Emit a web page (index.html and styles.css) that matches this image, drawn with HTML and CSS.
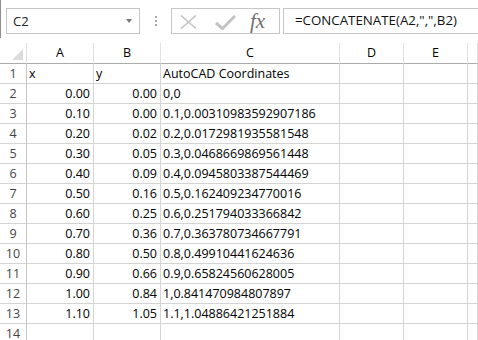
FILE: index.html
```html
<!DOCTYPE html>
<html lang="en">
<head>
    <meta charset="UTF-8">
    <title>AutoCAD Coordinates</title>
    <link rel="stylesheet" href="styles.css">
</head>
<body>

    <div class="toolbar">
        <div class="namebox">
            <span class="ref">C2</span>
            <span class="caret"></span>
        </div>
        <div class="grip"><i></i><i></i><i></i></div>
        <div class="fnbox">
            <svg class="cancel" width="17" height="14" viewBox="0 0 17 14">
                <path d="M1 0.5 L16 13.5 M16 0.5 L1 13.5" stroke="#c4c4c4" stroke-width="1.6" fill="none"/>
            </svg>
            <svg class="enter" width="21" height="15" viewBox="0 0 21 15">
                <path d="M1 8 L7.5 13.5 L20 1" stroke="#c4c4c4" stroke-width="3" fill="none"/>
            </svg>
            <span class="fx">fx</span>
        </div>
        <div class="formula">=CONCATENATE(A2,",",B2)</div>
    </div>

    <div class="sheet">
        <div class="row head">
            <div class="corner"></div>
            <div>A</div><div>B</div><div>C</div><div>D</div><div>E</div><div></div>
        </div>
        <div class="row">
            <div class="rh">1</div>
            <div>x</div><div>y</div><div>AutoCAD Coordinates</div><div></div><div></div><div></div>
        </div>
        <div class="row">
            <div class="rh">2</div>
            <div class="num">0.00</div><div class="num">0.00</div><div>0,0</div><div></div><div></div><div></div>
        </div>
        <div class="row">
            <div class="rh">3</div>
            <div class="num">0.10</div><div class="num">0.00</div><div>0.1,0.00310983592907186</div><div></div><div></div><div></div>
        </div>
        <div class="row">
            <div class="rh">4</div>
            <div class="num">0.20</div><div class="num">0.02</div><div>0.2,0.0172981935581548</div><div></div><div></div><div></div>
        </div>
        <div class="row">
            <div class="rh">5</div>
            <div class="num">0.30</div><div class="num">0.05</div><div>0.3,0.0468669869561448</div><div></div><div></div><div></div>
        </div>
        <div class="row">
            <div class="rh">6</div>
            <div class="num">0.40</div><div class="num">0.09</div><div>0.4,0.0945803387544469</div><div></div><div></div><div></div>
        </div>
        <div class="row">
            <div class="rh">7</div>
            <div class="num">0.50</div><div class="num">0.16</div><div>0.5,0.162409234770016</div><div></div><div></div><div></div>
        </div>
        <div class="row">
            <div class="rh">8</div>
            <div class="num">0.60</div><div class="num">0.25</div><div>0.6,0.251794033366842</div><div></div><div></div><div></div>
        </div>
        <div class="row">
            <div class="rh">9</div>
            <div class="num">0.70</div><div class="num">0.36</div><div>0.7,0.363780734667791</div><div></div><div></div><div></div>
        </div>
        <div class="row">
            <div class="rh">10</div>
            <div class="num">0.80</div><div class="num">0.50</div><div>0.8,0.49910441624636</div><div></div><div></div><div></div>
        </div>
        <div class="row">
            <div class="rh">11</div>
            <div class="num">0.90</div><div class="num">0.66</div><div>0.9,0.65824560628005</div><div></div><div></div><div></div>
        </div>
        <div class="row">
            <div class="rh">12</div>
            <div class="num">1.00</div><div class="num">0.84</div><div>1,0.841470984807897</div><div></div><div></div><div></div>
        </div>
        <div class="row">
            <div class="rh">13</div>
            <div class="num">1.10</div><div class="num">1.05</div><div>1.1,1.04886421251884</div><div></div><div></div><div></div>
        </div>
        <div class="row">
            <div class="rh">14</div>
            <div></div><div></div><div></div><div></div><div></div><div></div>
        </div>
    </div>

</body>
</html>
```

FILE: styles.css
```css
body {
    margin: 0;
    background: #fff;
    font-family: 'Open Sans', 'Liberation Sans', sans-serif;
    overflow: hidden;
}

/* formula bar */
.toolbar {
    display: flex;
    align-items: flex-start;
    height: 38px;
    margin-bottom: 5px;
    padding: 8px 0 0 5px;
    box-sizing: border-box;
    border-left: 1px solid #8f8f8f;
}

.namebox {
    display: flex;
    align-items: center;
    width: 134px;
    height: 26px;
    box-sizing: border-box;
    border: 1px solid #c6c6c6;
    padding: 0 7px 0 6px;
}

.ref {
    font-size: 13px;
    color: #222;
}

.caret {
    margin-left: auto;
    width: 0;
    height: 0;
    border-left: 3.5px solid transparent;
    border-right: 3.5px solid transparent;
    border-top: 4px solid #7a7a7a;
}

.grip {
    width: 31px;
    height: 26px;
    display: flex;
    flex-direction: column;
    align-items: center;
    justify-content: center;
    gap: 2px;
}

.grip i {
    width: 2px;
    height: 2px;
    background: #a8a8a8;
}

.fnbox {
    display: flex;
    align-items: center;
    width: 109px;
    height: 26px;
    box-sizing: border-box;
    border: 1px solid #c6c6c6;
    padding-left: 8px;
}

.cancel {
    margin-top: 2px;
}

.enter {
    margin-left: 18px;
    margin-top: 2px;
}

.fx {
    margin-left: 14px;
    font-family: 'Liberation Serif', serif;
    font-style: italic;
    font-size: 21px;
    color: #6f6f6f;
    line-height: 24px;
}

.formula {
    flex: 1;
    margin-left: 3px;
    height: 26px;
    box-sizing: border-box;
    border: 1px solid #c6c6c6;
    border-right: none;
    padding-left: 11px;
    font-size: 13.3px;
    line-height: 23px;
    color: #111;
    white-space: nowrap;
}

/* grid */
.row {
    display: grid;
    grid-template-columns: 27px 67px 67px 179px 64px 64px 1fr;
    height: 20px;
    font-size: 12.5px;
}

.row > div {
    box-sizing: border-box;
    border-right: 1px solid #d4d4d4;
    border-bottom: 1px solid #d4d4d4;
    padding: 0 2px;
    line-height: 19px;
    white-space: nowrap;
    overflow: hidden;
    color: #000;
}

.row > .num {
    text-align: right;
    padding-right: 3px;
}

.row > .rh {
    text-align: center;
    color: #444;
    border-right-color: #c6c6c6;
}

.head {
    height: 21px;
}

.head > div {
    border-right-color: #e1e1e1;
    border-bottom-color: #ababab;
    text-align: center;
    line-height: 20px;
}

.row > div.corner {
    display: flex;
    justify-content: flex-end;
    align-items: flex-end;
    padding: 0 3px 3px 0;
}

.corner::after {
    content: "";
    width: 0;
    height: 0;
    border-left: 11px solid transparent;
    border-bottom: 11px solid #dcdcdc;
}
```
